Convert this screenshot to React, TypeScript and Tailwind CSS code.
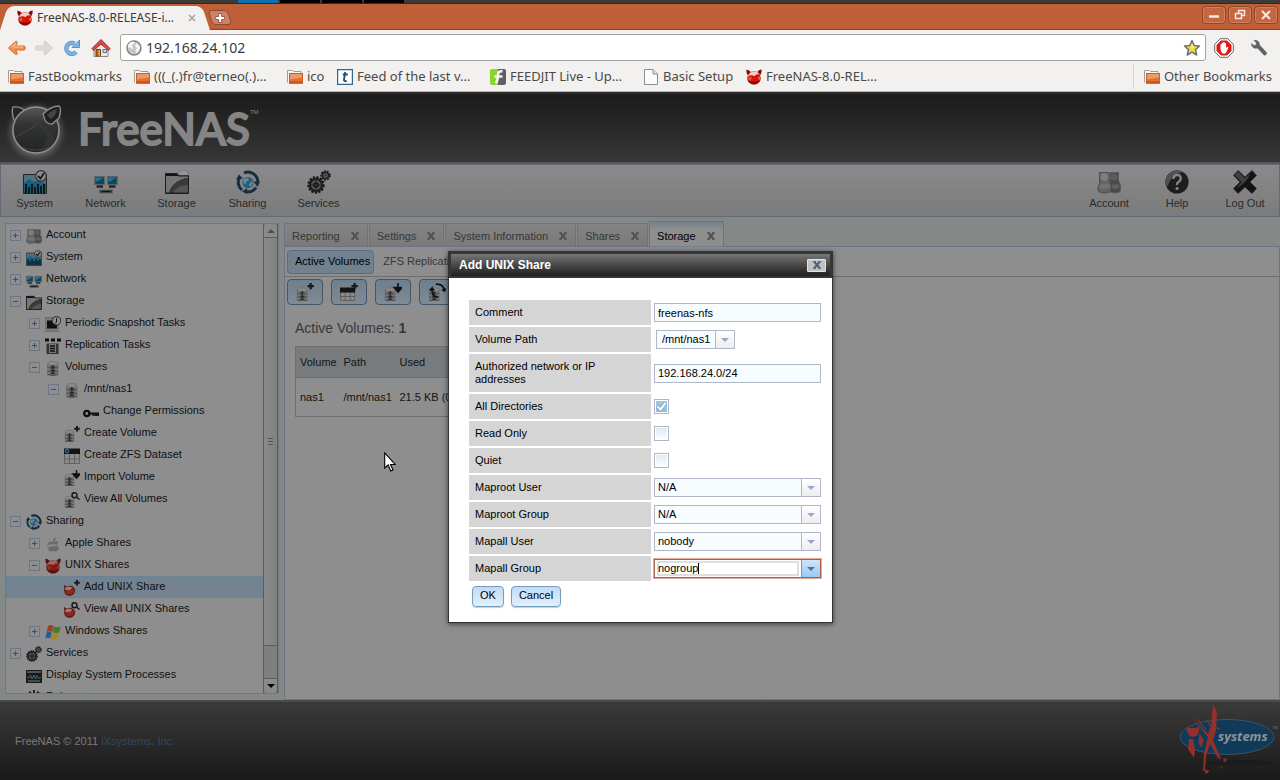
import { useState, type ReactNode } from 'react';

interface IconProps {
  className?: string;
}

/* ---------- Browser icons ---------- */

function DaemonIcon({ className, dim }: IconProps & { dim?: boolean }) {
  const body = dim ? '#8a1712' : '#d81408';
  const dark = dim ? '#4a1512' : '#7d0d08';
  const shine = dim ? '#8f6f6c' : '#f3cdc7';
  return (
    <svg viewBox="0 0 16 16" className={className}>
      <path d="M.4.8c2 .2 3.600 1 4.400 2.200L2 6.600C.8 5 .2 3 .4.8z" fill={dark} />
      <path d="M15.600.4c-2.200.2-3.600 1.200-4.400 2.800l2.800 3C15.400 4.600 15.900 2.600 15.600.4z" fill={dark} />
      <circle cx="8" cy="9" r="6.800" fill={body} />
      <path d="M1.600 10.500a6.800 6.800 0 0 0 12.800 0c-3 3-9.800 3-12.800 0z" fill={dark} />
      <path d="M2 7.400C3 4 5.400 2.600 8 2.600s4.600 1 5.600 3c-2.400-.8-4 .2-5.200 1.600C6.600 5.800 4.400 6 2 7.400z" fill={shine} />
      <path d="M2.200 8.500q2-1 3.800.5l-2 3q-1.800-1-1.800-3.500z" fill={shine} opacity=".35" />
      <path d="M13 7.200l1.200 1.400-.8 3-1.400-2z" fill={shine} opacity=".5" />
    </svg>
  );
}

function FolderIcon({ className }: IconProps) {
  return (
    <svg viewBox="0 0 16 16" className={className}>
      <path d="M.5 13.500V1.500h5l1 1h7.500V5" fill="#fbfaf8" stroke="#a09c98" />
      <path d="M2 4h14v10.500H2z" fill="#e0712f" />
      <path d="M3 5h12v3.500L3 10.500z" fill="#eb9a6a" />
      <path d="M2 12.500h14v2H2z" fill="#cc4718" />
      <path d="M2.500 4.500h13v9.500h-13z" fill="none" stroke="#c65a26" strokeWidth=".8" />
    </svg>
  );
}

function BackIcon({ className }: IconProps) {
  return (
    <svg viewBox="0 0 20 20" className={className}>
      <path d="M1.500 10l7-6.500c1.500-.5 2 .8 1.500 2L8.500 8H17c1.800.2 1.800 3.800 0 4H8.500l1.500 2.500c.5 1.200 0 2.500-1.500 2z" fill="#f3924c" stroke="#d96b20" />
      <path d="M4 9.500l4.500-4L7 9h9" fill="none" stroke="#fbc59c" />
    </svg>
  );
}

function ForwardIcon({ className }: IconProps) {
  return (
    <svg viewBox="0 0 20 20" className={className}>
      <path d="M18.500 10l-7-6.500c-1.500-.5-2 .8-1.500 2L11.500 8H3c-1.800.2-1.800 3.800 0 4h8.500L10 14.500c-.5 1.200 0 2.500 1.500 2z" fill="#dddbd9" stroke="#cfccc9" />
    </svg>
  );
}

function ReloadIcon({ className }: IconProps) {
  return (
    <svg viewBox="0 0 20 20" className={className}>
      <path d="M14 14A5.500 5.500 0 1 1 12.500 5.500" fill="none" stroke="#5590c8" strokeWidth="4.400" />
      <path d="M14 14A5.500 5.500 0 1 1 12.500 5.500" fill="none" stroke="#7fb3e3" strokeWidth="2.800" />
      <path d="M17.500 2v7.500H10l2.500-2.500 2-2z" fill="#7fb3e3" stroke="#5590c8" />
    </svg>
  );
}

function HomeIcon({ className }: IconProps) {
  return (
    <svg viewBox="0 0 20 20" className={className}>
      <path d="M3 9v9.500h14V9l-7-6z" fill="#e9e7df" stroke="#8b8880" />
      <path d="M5 11.500h4.500v6.500H5z" fill="#a86524" stroke="#744212" />
      <path d="M7.500 12h1.500v6H7.500z" fill="#dfb53c" />
      <path d="M12 11.500h3.500v3H12z" fill="#c4dbed" stroke="#597790" />
      <path d="M1 10.500L10 1.500l9 9-1.500 2L10 6l-7.500 6.500z" fill="#d74b49" stroke="#a52b2b" />
    </svg>
  );
}

function GlobeIcon({ className }: IconProps) {
  return (
    <svg viewBox="0 0 16 16" className={className}>
      <circle cx="8" cy="8" r="7" fill="#c6c6c6" stroke="#808080" strokeWidth="1.400" />
      <path d="M3 3.500C5 1.500 7 1.600 8.500 2L7.500 4 5.500 5.500 7.500 8 6 9 3.500 7 2 8q-.3-3 1-4.500z" fill="#f8f8f8" />
      <path d="M10 3l3 2 1 3-1.500 3.500L10 13l-.5-3L11 8 9 6z" fill="#f4f4f4" />
    </svg>
  );
}

function StarIcon({ className }: IconProps) {
  return (
    <svg viewBox="0 0 18 18" className={className}>
      <path d="M9 1.500l2.200 5 5.300.5-4 3.600 1.200 5.400L9 13.200 4.300 16l1.200-5.400-4-3.600 5.300-.5z" fill="#f8d83a" stroke="#66727e" strokeWidth="1.500" strokeLinejoin="round" />
      <path d="M9 4.500l1.200 3.200 3 .3-5.200 1z" fill="#fdf09a" />
    </svg>
  );
}

function BlockIcon({ className }: IconProps) {
  return (
    <svg viewBox="0 0 20 20" className={className}>
      <path d="M6.300.7h7.400l5.600 5.600v7.400l-5.600 5.600H6.300L.7 13.700V6.300z" fill="#fff" stroke="#666" />
      <path d="M7 2.500h6L17.500 7v6L13 17.500H7L2.500 13V7z" fill="#dd1818" />
      <path d="M6.500 11V6.500c.2-.8 1.100-.8 1.300 0V5.200c.2-.8 1.200-.8 1.400 0v-.6c.2-.8 1.300-.8 1.500 0v.8c.3-.7 1.300-.6 1.400.2V10l1.200-1c.7-.3 1.200.2.900.9L12.500 14l-1 1.500h-3L7 13.500z" fill="#fff" />
    </svg>
  );
}

function WrenchIcon({ className }: IconProps) {
  return (
    <svg viewBox="0 0 18 18" className={className}>
      <path d="M4 1.500c2.500-.8 5.800 1 5.500 4.500l7 7.500c.8 1.200-1 3.200-2.500 2.500L7.500 9C4.500 10 1.200 8 1.500 4.500l2.500 2 2-.5.500-2z" fill="#636363" stroke="#555" strokeWidth=".5" />
    </svg>
  );
}

function PageIcon({ className }: IconProps) {
  return (
    <svg viewBox="0 0 16 16" className={className}>
      <path d="M1.500.5H10L14.500 5v10.500h-13z" fill="#fbfbfb" stroke="#8b8b8b" />
      <path d="M10 .5V5h4.500" fill="#e0e0e0" stroke="#8b8b8b" />
    </svg>
  );
}

function TIcon({ className }: IconProps) {
  return (
    <svg viewBox="0 0 16 16" className={className}>
      <path d="M.5.5h15v15H.5z" fill="#fff" stroke="#2c6791" strokeWidth="1.400" />
      <path d="M8.200 3L7 10.500Q6.700 12.800 9.800 12M5.800 5.500h5" fill="none" stroke="#1c4f70" strokeWidth="1.800" />
    </svg>
  );
}

function FeedjitIcon({ className }: IconProps) {
  return (
    <svg viewBox="0 0 16 16" className={className}>
      <path d="M2 0h6v16H2q-2 0-2-2V2q0-2 2-2z" fill="#8bd42e" />
      <path d="M8 0h6q2 0 2 2v12q0 2-2 2H8z" fill="#5e6061" />
      <path d="M12.500 2.500Q8 1.500 8 6q0 6-2.500 8M4.500 7.500h8" fill="none" stroke="#f5f5f5" strokeWidth="2.600" />
    </svg>
  );
}

/* ---------- FreeNAS icons ---------- */

function AccountIcon({ className }: IconProps) {
  return (
    <svg viewBox="0 0 24 24" className={className}>
      <path d="M13 2.500h8.500v8l1.500 3c1 3 1 5.500 0 8-3 2-7 2-10 0z" fill="#4a4a4a" stroke="#5c5c5c" />
      <path d="M2.500 2.500h9.500v7.500l2 4c1 3 .5 5.500-.5 7.500-3 2-9 2-12 0-1-3-.5-5.500 1-7.500z" fill="#636363" stroke="#484848" strokeWidth=".8" />
      <circle cx="7.500" cy="7" r="4" fill="#7e7e7e" />
      <circle cx="17" cy="7" r="3.500" fill="#5b5b5b" />
      <path d="M2.500 15q5-3 10 0v3q-4.500 2-10 0z" fill="#737373" />
      <path d="M15 15q4-2 7 0v3q-3 2-7 0z" fill="#606060" />
    </svg>
  );
}

function SystemIcon({ className }: IconProps) {
  return (
    <svg viewBox="0 0 24 24" className={className}>
      <path d="M.5 4.500h23v19H.5z" fill="#53717d" stroke="#202427" />
      <path d="M1 13l5-4 5 3 5-2 7 4v9H1z" fill="#18607f" />
      <path d="M3 23V14M6 23v-6M9 23v-9M12 23v-6M15 23v-9M18 23v-7M21 23v-9" stroke="#111" strokeWidth="1.800" />
      <circle cx="18" cy="6" r="5.300" fill="#8c8c8c" stroke="#333" strokeWidth="1.200" />
      <path d="M15 6l2.500 2.500L21 3" fill="none" stroke="#202020" strokeWidth="2" />
    </svg>
  );
}

function NetworkIcon({ className }: IconProps) {
  return (
    <svg viewBox="0 0 24 24" className={className}>
      <path d="M.8 6.500h9.700v8H.8zM13.500 6.500h9.700v8h-9.700z" fill="#0b4763" stroke="#5d6366" strokeWidth="1.200" />
      <path d="M1.500 7.500h8l-6 4h-2zM14.300 7.500h8l-6 4h-2z" fill="#257597" />
      <path d="M2.500 16.500h6.500M15 16.500h6.500" stroke="#262626" strokeWidth="2.400" />
      <path d="M5.500 20h13v3h-13z" fill="#333" stroke="#5c5c5c" />
      <path d="M8 21.500h8" stroke="#111" />
    </svg>
  );
}

function StorageIcon({ className }: IconProps) {
  return (
    <svg viewBox="0 0 24 24" className={className}>
      <path d="M14 1.500h2l1-1h3l1 1h2V6h-9z" fill="#969696" stroke="#777" strokeWidth=".6" />
      <path d="M0 3h12l1.500 2.500h10.500V23.500H0z" fill="#151515" />
      <path d="M1 6h22v2C16 9 7 13 4 22.500H1z" fill="#757575" />
      <path d="M23 8C16 9 7 13 4 22.500h19z" fill="#3a3a3a" />
      <path d="M23 15c-6 0-12 3-15 7.500h15z" fill="#555" />
      <path d="M.5 3.500h11.500l1.500 2.500h10v17.500H.5z" fill="none" stroke="#1d1d1d" />
    </svg>
  );
}

function SharingIcon({ className }: IconProps) {
  return (
    <svg viewBox="0 0 24 24" className={className}>
      <path d="M8 3A9.800 9.800 0 0 1 21.800 12.500M20 17.500A9.800 9.800 0 0 1 10 21.600M6 20A9.800 9.800 0 0 1 3.500 7.500" fill="none" stroke="#142f40" strokeWidth="3" />
      <path d="M17.500 11.500h6.500l-2.500 5.500zM11 18v6l-5-2.500zM0 9.500l3-5 4 4z" fill="#142f40" />
      <circle cx="12" cy="12.500" r="5.600" fill="#235f83" />
      <path d="M8 9l4-1 1 2.500-3 1v3l-3-2zM13 14l3-3 1 2-3 4z" fill="#728790" />
    </svg>
  );
}

function ServicesIcon({ className }: IconProps) {
  return (
    <svg viewBox="0 0 24 24" className={className}>
      <circle cx="9" cy="15" r="7.200" fill="#575757" stroke="#191919" strokeWidth="3" strokeDasharray="2.200 1.200" />
      <circle cx="9" cy="15" r="6" fill="none" stroke="#1d1d1d" strokeWidth="2.200" />
      <circle cx="9" cy="15" r="2" fill="#777" stroke="#111" strokeWidth="1.600" />
      <path d="M9 10v10M4 15h10" stroke="#222" />
      <circle cx="18.500" cy="5.500" r="4" fill="#777" stroke="#191919" strokeWidth="2.400" strokeDasharray="1.800 1" />
      <circle cx="18.500" cy="5.500" r="3" fill="#666" stroke="#222" strokeWidth="1.400" />
      <circle cx="18.500" cy="5.500" r="1" fill="#222" />
    </svg>
  );
}

function HelpIcon({ className }: IconProps) {
  return (
    <svg viewBox="0 0 24 24" className={className}>
      <circle cx="12" cy="12" r="11.600" fill="#1e1e1e" />
      <path d="M1 14A11.500 11.500 0 0 1 18 2C9 4 5 9 2.500 17z" fill="#505050" />
      <path d="M8.500 9q0-4 3.700-4t3.500 3.500q0 2-2 3.200T12 15" fill="none" stroke="#858585" strokeWidth="2.400" />
      <circle cx="12" cy="18.500" r="1.600" fill="#858585" />
    </svg>
  );
}

function LogOutIcon({ className }: IconProps) {
  return (
    <svg viewBox="0 0 24 24" className={className}>
      <path d="M5 .5L12 7l7-6.500 4.500 5-6.500 6.500 6.500 6.500-4.500 5L12 17l-7 6.500-4.500-5L7 12 .5 5.500z" fill="#131313" stroke="#2b2b2b" strokeWidth=".8" />
      <path d="M5 1.500L12 8l5-4.500C15 10 11 14 3 18.500L8.500 12 1.500 5.500z" fill="#3f3f3f" />
    </svg>
  );
}

function Disks() {
  return (
    <>
      <path d="M2.500 4v10.500q5 2 10.500 0V4z" fill="#777" stroke="#666" strokeWidth=".6" />
      <path d="M2.500 7.500q5 2 10.500 0M2.500 11q5 2 10.500 0M2.500 14.500q5 2 10.500 0" fill="none" stroke="#474747" strokeWidth=".9" />
      <ellipse cx="7.800" cy="3.500" rx="5.200" ry="2" fill="#8a8a8a" stroke="#646464" strokeWidth=".6" />
      <path d="M7.800 5v9.500M5.500 7h4.600M5.500 10.500h4.600M5.500 13.500h4.600" stroke="#2a2a2a" strokeWidth="1.300" />
    </>
  );
}

type Badge = 'plus' | 'down' | 'search' | 'cycle';

function BadgeMark({ badge }: { badge?: Badge }) {
  if (badge === 'plus') return <path d="M13 0v5.500M10.200 2.700h5.600" stroke="#191919" strokeWidth="2" />;
  if (badge === 'down') return <path d="M12.500 0v5M9 4l3.500 4L16 4z" fill="#111" stroke="#111" strokeWidth="1.500" />;
  if (badge === 'search')
    return (
      <g fill="none" stroke="#1b1b1b" strokeWidth="1.500">
        <circle cx="10.500" cy="3.200" r="2.500" />
        <path d="M12.500 5l3 2.500" />
      </g>
    );
  if (badge === 'cycle')
    return <path d="M7 1q7-.5 7.500 6l-2-1M14.500 7l1.500-2M9 12.500q-6 0-5.500-8L1.500 6.500M3.500 4.500l2 2" fill="none" stroke="#111" strokeWidth="1.500" />;
  return null;
}

function VolumeIcon({ className, badge }: IconProps & { badge?: Badge }) {
  return (
    <svg viewBox="0 0 16 16" className={className}>
      {badge ? (
        <g transform="translate(-1 3) scale(.84)">
          <Disks />
        </g>
      ) : (
        <Disks />
      )}
      <BadgeMark badge={badge} />
    </svg>
  );
}

function DaemonShareIcon({ className, badge }: IconProps & { badge?: Badge }) {
  return (
    <svg viewBox="0 0 16 16" className={className}>
      <path d="M0 5l3 1.500C5 5 8.500 5.500 10 7.500l1.200 2.500A5.600 5.600 0 0 1 .3 12z" fill="#671c18" />
      <path d="M1 8l3-1.500 3 .5 1.500 1-3 2.500L1.500 10z" fill="#9a7a76" />
      <path d="M1.500 11.500l7-2.500 1.500 2-2 3H3z" fill="#8a2a20" />
      <BadgeMark badge={badge} />
    </svg>
  );
}

function SnapshotIcon({ className }: IconProps) {
  return (
    <svg viewBox="0 0 16 16" className={className}>
      <path d="M.5 1.500h13v14H.5z" fill="#7a7a7a" stroke="#6f6f6f" />
      <path d="M2 4.500h10v8H2z" fill="#101010" />
      <circle cx="11.500" cy="4.800" r="4.300" fill="#8c8c8c" stroke="#272727" />
      <path d="M11.500 2v4L10 7.500" fill="none" stroke="#111" />
    </svg>
  );
}

function ReplicationIcon({ className }: IconProps) {
  return (
    <svg viewBox="0 0 16 16" className={className}>
      <path d="M0 .5h4v3H0zM6 .5h4v3H6zM12 .5h4v3h-4z" fill="#0f0f0f" />
      <path d="M1.500 5.500h12V16h-12z" fill="#333" />
      <path d="M4 6h7v9H4z" fill="#777" />
      <path d="M5 8h5M5 10.500h5M5 13h5" stroke="#111" strokeWidth="1.300" />
    </svg>
  );
}

function KeyIcon({ className }: IconProps) {
  return (
    <svg viewBox="0 0 16 16" className={className}>
      <circle cx="3.800" cy="9.500" r="2.600" fill="none" stroke="#0f0f0f" strokeWidth="2.400" />
      <path d="M6.500 9.500H16M10.500 10v2M13 10v2M15.300 10v2" stroke="#0f0f0f" strokeWidth="2" />
    </svg>
  );
}

function DatasetIcon({ className, badge }: IconProps & { badge?: Badge }) {
  return (
    <svg viewBox="0 0 16 16" className={className}>
      <path d={badge ? 'M.5 5h12.500v10.500H.5z' : 'M.5 1.500h15v14H.5z'} fill="#8b8b8b" stroke="#5a5a5a" strokeWidth=".8" />
      <path d={badge ? 'M4.500 8v7.500M9 8v7.500M0 12h13' : 'M5.500 6v10M10.500 6v10M0 11h16'} stroke="#5a5a5a" strokeWidth=".8" />
      <path d={badge ? 'M0 4h13.400v4.500H0z' : 'M0 .5h16v5.500H0z'} fill="#141414" />
      {badge ? <BadgeMark badge={badge} /> : <circle cx="3" cy="3.200" r="1.700" fill="none" stroke="#247393" strokeWidth="1.300" />}
    </svg>
  );
}

function AppleIcon({ className }: IconProps) {
  return (
    <svg viewBox="0 0 16 16" className={className}>
      <path d="M8 6c2-1.500 4.500-1 5.500.5-2 1.500-1.500 4 .8 5-1 3-2.800 4.500-4.300 4-1.300-.6-2-.6-3.300 0C4 16.500 1.500 11 3 7.500c1-2 3-2.300 5-1.500z" fill="#6a6a6a" />
      <path d="M3 9q5-2 9 0v1.500q-5-1-9 1z" fill="#888" />
      <path d="M8 5Q8 2.500 10.500 1.500 10.800 4 8 5z" fill="#5c5c5c" />
    </svg>
  );
}

function WindowsIcon({ className }: IconProps) {
  return (
    <svg viewBox="0 0 16 16" className={className}>
      <path d="M3 2q2.800-2 5.500 0L7 8Q4.500 6.500 1.700 8z" fill="#9a4023" />
      <path d="M9 2.500q3 1.500 6.800 0L14.200 8.200q-3 1.500-6.500 0z" fill="#4c7926" />
      <path d="M1.500 8.600q2.500-1.500 5.200 0L5.300 14.500q-2.500-1.500-5 0z" fill="#265f8b" />
      <path d="M7.500 9q3 1.500 6.500 0l-1.500 6q-3 1.500-6.500 0z" fill="#a68624" />
    </svg>
  );
}

function ProcessesIcon({ className }: IconProps) {
  return (
    <svg viewBox="0 0 16 16" className={className}>
      <path d="M0 2h16v13H0z" fill="#1a1a1a" />
      <path d="M1 3h14v2H1z" fill="#555" />
      <path d="M1 9l2 1 1.500-3L6 11l2-4 1.500 4L11 7.500l1.500 3L15 9" fill="none" stroke="#3c6a78" />
      <path d="M2 13h12" stroke="#777" />
    </svg>
  );
}

function RebootIcon({ className }: IconProps) {
  return (
    <svg viewBox="0 0 16 16" className={className}>
      <path d="M8 0v6M5 2a6.500 6.500 0 1 0 6 0" fill="none" stroke="#222" strokeWidth="2" />
    </svg>
  );
}

function LogoIcon({ className }: IconProps) {
  return (
    <svg viewBox="0 0 64 64" className={className}>
      <defs>
        <radialGradient id="halo">
          <stop offset=".7" stopColor="#777" stopOpacity=".75" />
          <stop offset="1" stopColor="#444" stopOpacity="0" />
        </radialGradient>
        <linearGradient id="ball" x1="0" y1="0" x2="0" y2="1">
          <stop offset="0" stopColor="#555759" />
          <stop offset=".35" stopColor="#333536" />
          <stop offset="1" stopColor="#232323" />
        </linearGradient>
      </defs>
      <circle cx="32" cy="36" r="31" fill="url(#halo)" />
      <path d="M10 24Q7 15 9 11q7-1 13 4" fill="#252525" stroke="#8a8a8a" strokeWidth="1.400" />
      <circle cx="32" cy="34" r="23" fill="url(#ball)" stroke="#909090" strokeWidth="1.500" />
      <path d="M14 23q18-7 37 20Q48 55 35 55 52 39 32 29q-8-5-18-6z" fill="#3c3e3f" opacity=".45" />
      <path d="M12 41q13-7 20-12M17 51q15 6 30 0" fill="none" stroke="#555" strokeWidth=".6" />
      <path d="M39 18q8-8 16-8 3 2 0 12l-7 6q-5 0-7-4z" fill="#202020" stroke="#8a8a8a" strokeWidth="1.400" />
      <path d="M43 19q5-5 10-6-1 7-6 10z" fill="#444" />
    </svg>
  );
}

function IxLogo({ className }: IconProps) {
  return (
    <svg viewBox="0 0 102 76" className={className}>
      <ellipse cx="62" cy="60" rx="32" ry="3" fill="#1c1c1c" />
      <ellipse cx="49" cy="34" rx="47" ry="17.500" fill="#103a59" stroke="#3f5361" />
      <path d="M9 24l2 1h8l2-2q1 8-3 10-6 2-8-2-2-3-1-7zM11 36h4l2 11-1 8-6-9z" fill="#94302b" />
      <path d="M13 14l17 17 3-8 2-22 4 8-1 18-3 10 8 19-3-1-8-14-4 12-1 14-2 2 1-18 4-17z" fill="#94302b" />
      <path d="M22 32l3 5-2 6-2-3zM29 17l4 7M20 17l8 10M36 24l6 2" fill="#94302b" stroke="#94302b" strokeWidth="1.200" />
      <circle cx="47" cy="57" r="1.700" fill="#94302b" />
      <path d="M27 67l4 1-3 3zM43 63l1 3" fill="#94302b" stroke="#94302b" strokeWidth=".7" />
      <text x="40" y="38" fill="#8d9296" fontFamily="Open Sans, sans-serif" fontStyle="italic" fontWeight="700" fontSize="13">
        systems
      </text>
      <text x="94" y="26" fill="#777" fontFamily="Liberation Sans, sans-serif" fontSize="4">
        TM
      </text>
    </svg>
  );
}

/* ---------- Data ---------- */

const bookmarks = [
  { label: 'FastBookmarks', icon: <FolderIcon className="size-4 shrink-0" />, width: 'w-[126px]' },
  { label: '(((_(.)fr@terneo(.)…', icon: <FolderIcon className="size-4 shrink-0" />, width: 'w-[153px]' },
  { label: 'ico', icon: <FolderIcon className="size-4 shrink-0" />, width: 'w-[50px]' },
  { label: 'Feed of the last v…', icon: <TIcon className="size-4 shrink-0" />, width: 'w-[153px]' },
  { label: 'FEEDJIT Live - Up…', icon: <FeedjitIcon className="size-4 shrink-0" />, width: 'w-[153px]' },
  { label: 'Basic Setup', icon: <PageIcon className="size-4 shrink-0" />, width: 'w-[103px]' },
  { label: 'FreeNAS-8.0-REL…', icon: <DaemonIcon className="size-4 shrink-0" />, width: 'w-[150px]' },
];

const mainNav = [
  { label: 'System', icon: <SystemIcon className="size-6" /> },
  { label: 'Network', icon: <NetworkIcon className="size-6" /> },
  { label: 'Storage', icon: <StorageIcon className="size-6" /> },
  { label: 'Sharing', icon: <SharingIcon className="size-6" /> },
  { label: 'Services', icon: <ServicesIcon className="size-6" /> },
];

const userNav = [
  { label: 'Account', icon: <AccountIcon className="size-6" /> },
  { label: 'Help', icon: <HelpIcon className="size-6" /> },
  { label: 'Log Out', icon: <LogOutIcon className="size-6" /> },
];

interface TreeItem {
  label: string;
  level: 0 | 1 | 2 | 3;
  icon: ReactNode;
  state?: 'open' | 'closed';
  selected?: boolean;
}

const tree: TreeItem[] = [
  { label: 'Account', level: 0, icon: <AccountIcon />, state: 'closed' },
  { label: 'System', level: 0, icon: <SystemIcon />, state: 'closed' },
  { label: 'Network', level: 0, icon: <NetworkIcon />, state: 'closed' },
  { label: 'Storage', level: 0, icon: <StorageIcon />, state: 'open' },
  { label: 'Periodic Snapshot Tasks', level: 1, icon: <SnapshotIcon />, state: 'closed' },
  { label: 'Replication Tasks', level: 1, icon: <ReplicationIcon />, state: 'closed' },
  { label: 'Volumes', level: 1, icon: <VolumeIcon />, state: 'open' },
  { label: '/mnt/nas1', level: 2, icon: <VolumeIcon />, state: 'open' },
  { label: 'Change Permissions', level: 3, icon: <KeyIcon /> },
  { label: 'Create Volume', level: 2, icon: <VolumeIcon badge="plus" /> },
  { label: 'Create ZFS Dataset', level: 2, icon: <DatasetIcon /> },
  { label: 'Import Volume', level: 2, icon: <VolumeIcon badge="down" /> },
  { label: 'View All Volumes', level: 2, icon: <VolumeIcon badge="search" /> },
  { label: 'Sharing', level: 0, icon: <SharingIcon />, state: 'open' },
  { label: 'Apple Shares', level: 1, icon: <AppleIcon />, state: 'closed' },
  { label: 'UNIX Shares', level: 1, icon: <DaemonIcon dim />, state: 'open' },
  { label: 'Add UNIX Share', level: 2, icon: <DaemonShareIcon badge="plus" />, selected: true },
  { label: 'View All UNIX Shares', level: 2, icon: <DaemonShareIcon badge="search" /> },
  { label: 'Windows Shares', level: 1, icon: <WindowsIcon />, state: 'closed' },
  { label: 'Services', level: 0, icon: <ServicesIcon />, state: 'closed' },
  { label: 'Display System Processes', level: 0, icon: <ProcessesIcon /> },
  { label: 'Reboot', level: 0, icon: <RebootIcon /> },
];

const indents = ['pl-1', 'pl-[23px]', 'pl-[42px]', 'pl-[61px]'];

const tabs = ['Reporting', 'Settings', 'System Information', 'Shares', 'Storage'];

/* ---------- Browser chrome ---------- */

function WindowButton({ label, children }: { label: string; children: ReactNode }) {
  return (
    <button type="button" aria-label={label} className="flex h-[18px] w-6 items-center justify-center rounded-sm border border-[#8e4528] bg-[#c4663f] shadow-[inset_0_0_0_1px_#d28161]">
      <svg viewBox="0 0 12 12" className="size-3" fill="none" stroke="#f9e9e0" strokeWidth="1.500">
        {children}
      </svg>
    </button>
  );
}

function BrowserChrome() {
  const [url, setUrl] = useState('192.168.24.102');

  return (
    <header className="shrink-0 font-['Noto_Sans','Open_Sans',sans-serif] text-[#3c3b37]">
      {/* Desktop panel edge */}
      <div className="flex h-1 border-b border-[#2b2a27] bg-[#3c3b37] pl-[238px]">
        <div className="w-10 bg-[#0c70b5]" />
        <div className="ml-0.5 w-10 bg-black" />
        <div className="ml-0.5 w-10 bg-black" />
        <div className="ml-0.5 w-10 bg-black" />
      </div>

      {/* Tab strip */}
      <div className="flex h-[26px] items-start border-b border-[#8c452a] bg-[#c05f38]">
        <div className="relative mt-0.5 flex h-6 w-[210px] items-center pr-[14px] pl-[17px] before:absolute before:inset-y-0 before:left-1 before:w-1/2 before:-skew-x-[18deg] before:rounded-tl-md before:bg-[#f2f1f0] after:absolute after:inset-y-0 after:right-1 after:w-1/2 after:skew-x-[18deg] after:rounded-tr-md after:bg-[#f2f1f0]">
          <DaemonIcon className="relative z-10 size-4 shrink-0" />
          <span className="relative z-10 ml-1 flex-1 text-xs whitespace-nowrap">FreeNAS-8.0-RELEASE-i…</span>
          <button type="button" aria-label="Close tab" className="relative z-10">
            <svg viewBox="0 0 8 8" className="size-2" stroke="#aaa7a3" strokeWidth="1.600">
              <path d="M1 1l6 6M7 1L1 7" />
            </svg>
          </button>
        </div>
        <button type="button" aria-label="New tab" className="mt-1.5 flex h-[15px] w-5 skew-x-[18deg] items-center justify-center rounded-sm border border-[#90492e] bg-[#cf8265]">
          <svg viewBox="0 0 10 10" className="size-[10px] -skew-x-[18deg]">
            <path d="M3.500.5h3v3h3v3h-3v3h-3v-3h-3v-3h3z" fill="#fff" stroke="#7d4630" strokeWidth=".8" />
          </svg>
        </button>
        <div className="mt-0.5 mr-0.5 ml-auto flex gap-0.5">
          <WindowButton label="Minimize">
            <path d="M1 7.500h10" strokeWidth="2.500" />
          </WindowButton>
          <WindowButton label="Restore">
            <path d="M1.500 4.500h6v5h-6zM4.500 4V1.500h6v5H8" />
          </WindowButton>
          <WindowButton label="Close">
            <path d="M2 2l8 8M10 2l-8 8" strokeWidth="2" />
          </WindowButton>
        </div>
      </div>

      {/* Address bar */}
      <div className="flex h-[33px] items-center bg-[#f2f1f0] pt-0.5 pr-3 pl-[7px]">
        <button type="button" aria-label="Back">
          <BackIcon className="size-5" />
        </button>
        <button type="button" aria-label="Forward" className="ml-[7px]">
          <ForwardIcon className="size-5" />
        </button>
        <button type="button" aria-label="Reload" className="ml-2">
          <ReloadIcon className="size-5" />
        </button>
        <button type="button" aria-label="Home" className="ml-[9px]">
          <HomeIcon className="size-5" />
        </button>
        <div className="ml-[9px] flex h-[27px] flex-1 items-center rounded-[3px] border border-[#a5a29d] bg-white pr-1 pl-[5px]">
          <GlobeIcon className="size-4" />
          <input
            aria-label="Address"
            value={url}
            onChange={(e) => setUrl(e.target.value)}
            className="ml-1 min-w-0 flex-1 bg-transparent text-sm outline-none"
          />
          <StarIcon className="size-[18px]" />
        </div>
        <button type="button" aria-label="Ad block" className="ml-2">
          <BlockIcon className="size-5" />
        </button>
        <button type="button" aria-label="Settings" className="ml-4">
          <WrenchIcon className="size-[18px]" />
        </button>
      </div>

      {/* Bookmarks */}
      <nav className="flex h-[29px] items-center border-b border-[#b9b6b2] bg-[#f2f1f0] pr-2 pl-2 text-[13px] text-[#4a4945]">
        {bookmarks.map((b) => (
          <a key={b.label} href="#" className={`flex shrink-0 items-center gap-1 whitespace-nowrap ${b.width}`}>
            {b.icon}
            {b.label}
          </a>
        ))}
        <a href="#" className="ml-auto flex h-6 items-center gap-1 border-l border-[#d5d2cf] pl-[10px] whitespace-nowrap">
          <FolderIcon className="size-4" />
          Other Bookmarks
        </a>
      </nav>
    </header>
  );
}

/* ---------- Page ---------- */

function NavButton({ label, icon, wide }: { label: string; icon: ReactNode; wide?: boolean }) {
  return (
    <button type="button" className={`flex flex-col items-center gap-[3px] ${wide ? 'w-[71px]' : 'w-[68px]'}`}>
      {icon}
      <span className="leading-3">{label}</span>
    </button>
  );
}

function CloseMark({ className }: IconProps) {
  return (
    <svg viewBox="0 0 8 8" className={className} stroke="currentColor" strokeWidth="2">
      <path d="M0 .8h3M5 .8h3M0 7.200h3M5 7.200h3" strokeWidth="1.300" />
      <path d="M1.500 1l5 6M6.500 1l-5 6" />
    </svg>
  );
}

function Sidebar() {
  return (
    <aside className="flex w-[274px] shrink-0 border border-[#737777] bg-[#8e8e8e]">
      <ul className="min-w-0 flex-1 overflow-hidden text-[#0e1011]">
        {tree.map((item) => (
          <li
            key={item.label}
            className={`flex h-[22px] items-start ${indents[item.level]} ${item.selected ? 'bg-[#74838f] shadow-[inset_0_0_0_1px_#6a8296]' : ''}`}
          >
            {item.state ? (
              <button
                type="button"
                aria-label={`Toggle ${item.label}`}
                className="mt-[6px] flex size-[11px] shrink-0 items-center justify-center border border-[#6b7689]"
              >
                <svg viewBox="0 0 7 7" className="size-[7px]" stroke="#414d61">
                  <path d={item.state === 'open' ? 'M1 3.500h5' : 'M1 3.500h5M3.500 1v5'} />
                </svg>
              </button>
            ) : (
              <span className="w-[11px] shrink-0" />
            )}
            <span className="mt-1 ml-[5px] size-4 shrink-0">{item.icon}</span>
            <a href="#" className="ml-1 leading-5 whitespace-nowrap">
              {item.label}
            </a>
          </li>
        ))}
      </ul>

      {/* Scrollbar */}
      <div className="flex w-[15px] shrink-0 flex-col border-x border-[#5c5c5c] bg-[#7c7c7c]">
        <div className="flex h-[14px] items-center justify-center rounded-t border-b border-[#5c5c5c] bg-[#8a8a8a]">
          <svg viewBox="0 0 8 4" className="h-1 w-2">
            <path d="M0 4l4-4 4 4z" fill="#505050" />
          </svg>
        </div>
        <div className="flex flex-1 flex-col items-center justify-center gap-0.5 border-b border-[#5c5c5c] bg-gradient-to-r from-[#8a8a8a] to-[#818181]">
          <span className="h-px w-[5px] bg-[#555]" />
          <span className="h-px w-[5px] bg-[#555]" />
          <span className="h-px w-[5px] bg-[#555]" />
        </div>
        <div className="h-8 bg-[#7f7f7f]" />
        <div className="flex h-[15px] items-center justify-center rounded-b border-t border-[#5c5c5c] bg-[#8a8a8a]">
          <svg viewBox="0 0 8 4" className="h-1 w-2">
            <path d="M0 0l4 4 4-4z" fill="#000" />
          </svg>
        </div>
      </div>
    </aside>
  );
}

function Content() {
  return (
    <main className="flex min-w-0 flex-1 flex-col">
      {/* Tabs */}
      <div className="flex h-[26px] shrink-0 items-end gap-px shadow-[inset_0_-1px_0_#6d7383]">
        {tabs.map((tab) => {
          const active = tab === 'Storage';
          return (
            <div
              key={tab}
              className={`flex items-center border px-[7px] ${
                active
                  ? 'h-[26px] border-[#6d7383] border-b-transparent bg-gradient-to-b from-[#71818e] to-[#8e8e8e] to-30% pt-1 text-black'
                  : 'h-6 border-[#6d7383] bg-gradient-to-b from-[#848484] to-[#7a7a7a] pt-0.5 text-[#353739]'
              }`}
            >
              <a href="#">{tab}</a>
              <button type="button" aria-label={`Close ${tab}`} className="mx-px ml-[11px] text-[#4d535a]">
                <CloseMark className="size-2" />
              </button>
            </div>
          );
        })}
      </div>

      <div className="flex-1 border border-t-0 border-[#6d7383] bg-[#8e8e8e]">
        {/* Sub tabs */}
        <div className="flex h-[30px] items-center gap-[2px] border-b border-[#6e6e70] px-0.5">
          <button type="button" className="h-6 rounded-sm border border-[#566d81] bg-[#71818e] pr-[3px] pl-[7px] text-black">
            Active Volumes
          </button>
          <button type="button" className="h-6 px-[7px] text-[#353739]">
            ZFS Replication
          </button>
        </div>

        {/* Volume actions */}
        <div className="flex gap-2 px-0.5 pt-0.5">
          {[
            { label: 'Create volume', icon: <VolumeIcon badge="plus" className="size-[18px]" /> },
            { label: 'Create ZFS dataset', icon: <DatasetIcon badge="plus" className="size-[18px]" /> },
            { label: 'Import volume', icon: <VolumeIcon badge="down" className="size-[18px]" /> },
            { label: 'Auto import volume', icon: <VolumeIcon badge="cycle" className="size-[18px]" /> },
          ].map((action) => (
            <button
              key={action.label}
              type="button"
              aria-label={action.label}
              className="flex h-[26px] w-9 items-center justify-center rounded border border-[#3f566b] bg-gradient-to-b from-[#6d7f8e] to-[#808b94]"
            >
              {action.icon}
            </button>
          ))}
        </div>

        <div className="pt-[13px] pl-[10px]">
          <h2 className="text-sm leading-5 text-[#36383a]">
            Active Volumes: <b>1</b>
          </h2>
          <table className="mt-2 w-[300px] border-collapse border border-[#6d6f71] text-left text-[#121314]">
            <thead>
              <tr className="h-[31px] border-b border-[#6d6f71] bg-[#777b7e]">
                <th className="w-11 pl-1 font-normal">Volume</th>
                <th className="w-14 pl-1 font-normal">Path</th>
                <th className="pl-1 font-normal">Used</th>
              </tr>
            </thead>
            <tbody>
              <tr className="h-[39px]">
                <td className="pl-1">nas1</td>
                <td className="pl-1">/mnt/nas1</td>
                <td className="pl-1">21.5 KB (0%)</td>
              </tr>
            </tbody>
          </table>
        </div>
      </div>
    </main>
  );
}

/* ---------- Dialog ---------- */

function Row({ label, htmlFor, tall, children }: { label: string; htmlFor: string; tall?: boolean; children: ReactNode }) {
  return (
    <div className={`flex gap-[3px] ${tall ? 'h-[38px]' : 'h-[25px]'}`}>
      <label htmlFor={htmlFor} className="flex w-[182px] items-center bg-[#d5d5d5] pr-10 pl-[6px] leading-[13px]">
        {label}
      </label>
      <div className="flex flex-1 items-center">{children}</div>
    </div>
  );
}

function Arrow({ focused }: { focused?: boolean }) {
  return (
    <svg viewBox="0 0 8 4" className="h-1 w-2">
      <path d="M0 0l4 4 4-4z" fill={focused ? '#4c7194' : '#94a9c9'} />
    </svg>
  );
}

function SelectField({ id, value, short }: { id: string; value: string; short?: boolean }) {
  return (
    <div className={`flex h-[19px] border border-[#b0b7c8] bg-[#f7fcff] ${short ? 'ml-0.5 w-[79px]' : 'w-full'}`}>
      <select id={id} className={`min-w-0 flex-1 appearance-none bg-transparent outline-none ${short ? 'pl-[5px]' : 'pl-[3px]'}`}>
        <option>{value}</option>
      </select>
      <span className="flex w-[19px] items-center justify-center border-l border-[#b0b7c8] bg-gradient-to-b from-white to-[#ededf1]">
        <Arrow />
      </span>
    </div>
  );
}

function CheckField({ id, checked }: { id: string; checked?: boolean }) {
  return (
    <span className="relative flex size-[15px]">
      <input
        id={id}
        type="checkbox"
        defaultChecked={checked}
        className="peer size-[15px] appearance-none border border-[#b0b7c8] bg-gradient-to-b from-[#d9e8f4] to-white shadow-[inset_0_0_0_1px_white] checked:from-[#a3c9e4] checked:to-[#8fbce0]"
      />
      <svg viewBox="0 0 15 15" className="pointer-events-none absolute inset-0 hidden size-[15px] peer-checked:block">
        <path d="M3.500 7.500l3 3 5-6.500" fill="none" stroke="#5c88a8" strokeWidth="3.400" />
        <path d="M3.500 7.500l3 3 5-6.500" fill="none" stroke="#fff" strokeWidth="2.200" />
      </svg>
    </span>
  );
}

const textField = 'h-[19px] w-full min-w-0 border border-[#b0b7c8] bg-[#f7fcff] pl-[3px] outline-none';
const formButton =
  'flex h-[21px] items-center rounded border border-[#759dc0] bg-gradient-to-b from-[#c0dcf5] to-[#e2f0fc] px-[7px] pb-[2px] shadow-[0_1px_1px_rgba(0,0,0,0.2)]';

function AddShareDialog() {
  return (
    <div role="dialog" aria-labelledby="dialog-title" className="w-[385px] border border-[#333] bg-white text-black shadow-[0_1px_5px_rgba(0,0,0,0.6)]">
      <div className="flex h-[26px] items-center border-2 border-[#363636] bg-gradient-to-b from-[#777] to-[#202020] pr-1 pl-2">
        <h1 id="dialog-title" className="text-xs font-bold text-white">
          Add UNIX Share
        </h1>
        <button type="button" aria-label="Close" className="ml-auto flex h-[13px] w-[19px] items-center justify-center rounded-[1px] border border-[#e4e4e4] bg-[#bfc1c3] text-[#4b6279]">
          <CloseMark className="size-2" />
        </button>
      </div>

      <form className="flex flex-col gap-0.5 pt-[22px] pr-[11px] pb-[15px] pl-5" onSubmit={(e) => e.preventDefault()}>
        <Row label="Comment" htmlFor="comment">
          <input id="comment" defaultValue="freenas-nfs" className={textField} />
        </Row>
        <Row label="Volume Path" htmlFor="path">
          <SelectField id="path" value="/mnt/nas1" short />
        </Row>
        <Row label="Authorized network or IP addresses" htmlFor="network" tall>
          <input id="network" defaultValue="192.168.24.0/24" className={textField} />
        </Row>
        <Row label="All Directories" htmlFor="alldirs">
          <CheckField id="alldirs" checked />
        </Row>
        <Row label="Read Only" htmlFor="ro">
          <CheckField id="ro" />
        </Row>
        <Row label="Quiet" htmlFor="quiet">
          <CheckField id="quiet" />
        </Row>
        <Row label="Maproot User" htmlFor="maproot-user">
          <SelectField id="maproot-user" value="N/A" />
        </Row>
        <Row label="Maproot Group" htmlFor="maproot-group">
          <SelectField id="maproot-group" value="N/A" />
        </Row>
        <Row label="Mapall User" htmlFor="mapall-user">
          <SelectField id="mapall-user" value="nobody" />
        </Row>
        <Row label="Mapall Group" htmlFor="mapall-group">
          <div className="flex h-[19px] w-full border border-[#a5614c] bg-white shadow-[0_0_0_1px_#e3ab97]">
            <div className="relative my-px mr-0.5 ml-0.5 flex flex-1 shadow-[inset_0_0_0_2px_#dededc]">
              <input
                id="mapall-group"
                role="combobox"
                aria-expanded="false"
                defaultValue="nogroup"
                className="w-full min-w-0 bg-transparent pl-px outline-none"
              />
              {/* Text caret */}
              <span className="absolute top-0.5 left-[41px] h-[11px] w-px bg-black" />
            </div>
            <button type="button" aria-label="Show groups" className="flex w-[19px] items-center justify-center border-l border-[#759dc0] bg-gradient-to-b from-[#cfe5f9] to-[#98c8f7]">
              <Arrow focused />
            </button>
          </div>
        </Row>
        <div className="flex gap-[7px] pt-[3px] pl-[3px]">
          <button type="submit" className={formButton}>
            OK
          </button>
          <button type="button" className={formButton}>
            Cancel
          </button>
        </div>
      </form>
    </div>
  );
}

export default function App() {
  return (
    <div className="flex h-screen flex-col overflow-hidden">
      <BrowserChrome />

      <div className="relative flex min-h-0 flex-1 flex-col bg-[#848886] font-['Liberation_Sans',Arial,sans-serif] text-[11px]">
        {/* Banner */}
        <div className="flex h-[72px] shrink-0 items-center border-t-2 border-b-2 border-t-[#2c2c2c] border-b-[#565857] bg-gradient-to-b from-[#1b1b1b] to-[#373737] pl-1">
          <LogoIcon className="size-16" />
          <span className="ml-[10px] font-['Lato',sans-serif] text-[44px] leading-[68px] font-medium text-[#858585] [-webkit-text-stroke:2px_#858585]">FreeNAS</span>
          <span className="mb-8 text-[6px] text-[#858585]">TM</span>
        </div>

        {/* Main navigation */}
        <nav className="flex h-[53px] shrink-0 items-start justify-between border border-[#666a78] bg-gradient-to-b from-[#8a8a8a] to-[#7b7b7b] pt-[5px] text-[#282a2c]">
          <div className="-ml-0.5 flex">
            {mainNav.map((n) => (
              <NavButton key={n.label} label={n.label} icon={n.icon} wide />
            ))}
          </div>
          <div className="flex">
            {userNav.map((n) => (
              <NavButton key={n.label} label={n.label} icon={n.icon} />
            ))}
          </div>
        </nav>

        <div className="flex min-h-0 flex-1 gap-[5px] pt-1 pl-[5px]">
          <div className="flex min-h-0 pt-0.5 pb-[6px]">
            <Sidebar />
          </div>
          <Content />
        </div>

        {/* Footer */}
        <footer className="flex h-20 shrink-0 items-center justify-between border-t-2 border-[#4a4c4b] bg-gradient-to-b from-[#3a3a3a] to-[#1a1a1a] pl-[15px] text-[#7b7b7b]">
          <p>
            FreeNAS © 2011{' '}
            <a href="#" className="text-[#2f4a61]">
              iXsystems, Inc.
            </a>
          </p>
          <IxLogo className="h-[76px] w-[102px]" />
        </footer>

        <div className="absolute inset-0 flex items-center justify-center pt-0.5 pl-px">
          <AddShareDialog />
        </div>

        {/* Mouse pointer */}
        <svg viewBox="0 0 12 20" className="pointer-events-none absolute top-[360px] left-[384px] h-5 w-3">
          <path d="M.7 1v15l3.500-3 2.500 6 2.300-1-2.500-5.500h4.700z" fill="#fff" stroke="#000" strokeWidth="1.100" />
        </svg>
      </div>
    </div>
  );
}
